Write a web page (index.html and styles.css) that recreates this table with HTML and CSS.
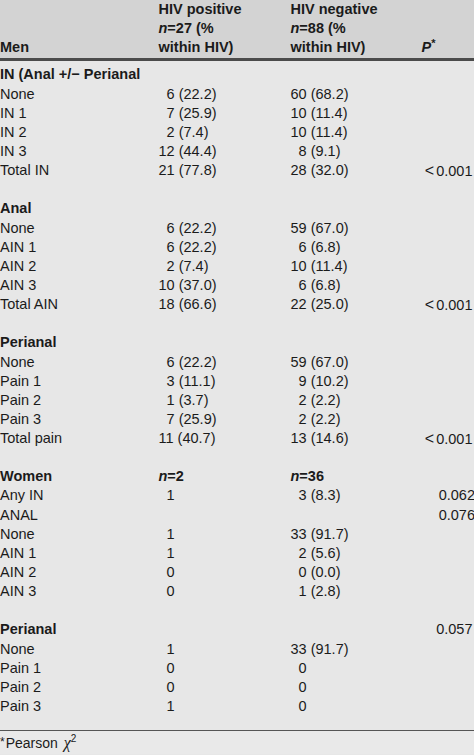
FILE: index.html
```html
<!DOCTYPE html>
<html>
<head>
<meta charset="utf-8">
<link rel="stylesheet" href="styles.css">
</head>
<body>
<div class="tbl">
  <div class="head">
    <div class="c1 b">Men</div>
    <div class="c2 b">HIV positive<br><i>n</i>=27 (%<br>within HIV)</div>
    <div class="c3 b">HIV negative<br><i>n</i>=88 (%<br>within HIV)</div>
    <div class="c4 b pstar"><i>P</i><sup>*</sup></div>
  </div>
  <div class="body">
    <div class="row"><div class="c1 b">IN (Anal +/− Perianal</div><div></div><div></div><div></div></div>
    <div class="row"><div class="c1">None</div><div class="c2">&#8199;6 (22.2)</div><div class="c3">60 (68.2)</div><div class="c4"></div></div>
    <div class="row"><div class="c1">IN 1</div><div class="c2">&#8199;7 (25.9)</div><div class="c3">10 (11.4)</div><div class="c4"></div></div>
    <div class="row"><div class="c1">IN 2</div><div class="c2">&#8199;2 (7.4)</div><div class="c3">10 (11.4)</div><div class="c4"></div></div>
    <div class="row"><div class="c1">IN 3</div><div class="c2">12 (44.4)</div><div class="c3">&#8199;8 (9.1)</div><div class="c4"></div></div>
    <div class="row"><div class="c1">Total IN</div><div class="c2">21 (77.8)</div><div class="c3">28 (32.0)</div><div class="c4"><span class="lt">&lt;</span>0.001</div></div>
    <div class="row blank"></div>
    <div class="row"><div class="c1 b">Anal</div><div></div><div></div><div></div></div>
    <div class="row"><div class="c1">None</div><div class="c2">&#8199;6 (22.2)</div><div class="c3">59 (67.0)</div><div class="c4"></div></div>
    <div class="row"><div class="c1">AIN 1</div><div class="c2">&#8199;6 (22.2)</div><div class="c3">&#8199;6 (6.8)</div><div class="c4"></div></div>
    <div class="row"><div class="c1">AIN 2</div><div class="c2">&#8199;2 (7.4)</div><div class="c3">10 (11.4)</div><div class="c4"></div></div>
    <div class="row"><div class="c1">AIN 3</div><div class="c2">10 (37.0)</div><div class="c3">&#8199;6 (6.8)</div><div class="c4"></div></div>
    <div class="row"><div class="c1">Total AIN</div><div class="c2">18 (66.6)</div><div class="c3">22 (25.0)</div><div class="c4"><span class="lt">&lt;</span>0.001</div></div>
    <div class="row blank"></div>
    <div class="row"><div class="c1 b">Perianal</div><div></div><div></div><div></div></div>
    <div class="row"><div class="c1">None</div><div class="c2">&#8199;6 (22.2)</div><div class="c3">59 (67.0)</div><div class="c4"></div></div>
    <div class="row"><div class="c1">Pain 1</div><div class="c2">&#8199;3 (11.1)</div><div class="c3">&#8199;9 (10.2)</div><div class="c4"></div></div>
    <div class="row"><div class="c1">Pain 2</div><div class="c2">&#8199;1 (3.7)</div><div class="c3">&#8199;2 (2.2)</div><div class="c4"></div></div>
    <div class="row"><div class="c1">Pain 3</div><div class="c2">&#8199;7 (25.9)</div><div class="c3">&#8199;2 (2.2)</div><div class="c4"></div></div>
    <div class="row"><div class="c1">Total pain</div><div class="c2">11 (40.7)</div><div class="c3">13 (14.6)</div><div class="c4"><span class="lt">&lt;</span>0.001</div></div>
    <div class="row blank"></div>
    <div class="row"><div class="c1 b">Women</div><div class="c2 b"><i>n</i>=2</div><div class="c3 b"><i>n</i>=36</div><div class="c4"></div></div>
    <div class="row"><div class="c1">Any IN</div><div class="c2">&#8199;1</div><div class="c3">&#8199;3 (8.3)</div><div class="c4 cut">0.062</div></div>
    <div class="row"><div class="c1">ANAL</div><div class="c2"></div><div class="c3"></div><div class="c4 cut">0.076</div></div>
    <div class="row"><div class="c1">None</div><div class="c2">&#8199;1</div><div class="c3">33 (91.7)</div><div class="c4"></div></div>
    <div class="row"><div class="c1">AIN 1</div><div class="c2">&#8199;1</div><div class="c3">&#8199;2 (5.6)</div><div class="c4"></div></div>
    <div class="row"><div class="c1">AIN 2</div><div class="c2">&#8199;0</div><div class="c3">&#8199;0 (0.0)</div><div class="c4"></div></div>
    <div class="row"><div class="c1">AIN 3</div><div class="c2">&#8199;0</div><div class="c3">&#8199;1 (2.8)</div><div class="c4"></div></div>
    <div class="row blank"></div>
    <div class="row"><div class="c1 b">Perianal</div><div></div><div></div><div class="c4">0.057</div></div>
    <div class="row"><div class="c1">None</div><div class="c2">&#8199;1</div><div class="c3">33 (91.7)</div><div class="c4"></div></div>
    <div class="row"><div class="c1">Pain 1</div><div class="c2">&#8199;0</div><div class="c3">&#8199;0</div><div class="c4"></div></div>
    <div class="row"><div class="c1">Pain 2</div><div class="c2">&#8199;0</div><div class="c3">&#8199;0</div><div class="c4"></div></div>
    <div class="row"><div class="c1">Pain 3</div><div class="c2">&#8199;1</div><div class="c3">&#8199;0</div><div class="c4"></div></div>
  </div>
  <div class="foot"><sup class="fa">*</sup>Pearson <i class="chi">χ</i><sup class="sq">2</sup></div>
</div>
</body>
</html>
```

FILE: styles.css
```css
html, body {
  margin: 0;
  padding: 0;
  background: #e7e7e7;
  overflow: hidden;
}
body {
  width: 474px;
  height: 755px;
  font-family: "Liberation Sans", Arial, Helvetica, sans-serif;
  font-size: 14.5px;
  color: #1b1b1b;
}
.tbl {
  width: 474px;
}
.head, .row {
  display: grid;
  grid-template-columns: 158.5px 132px 1fr 90px;
}
.head {
  height: 58px;
  background: #d3d3d3;
  border-bottom: 3px solid #4b4b4b;
  align-items: end;
  line-height: 19.2px;
  overflow: hidden;
}
.head > div {
  padding-bottom: 7px;
}
.b { font-weight: bold; }
.head .pstar {
  text-align: left;
  padding-left: 37.5px;
  padding-right: 0;
}
.pstar sup {
  font-size: 11px;
  line-height: 0;
  vertical-align: 5px;
  font-style: normal;
}
.body {
  padding: 4.4px 0 13.5px;
}
.row {
  height: 19.15px;
  line-height: 19.15px;
  white-space: nowrap;
}
.c1 {
  padding-left: 0;
}
.c4 {
  text-align: right;
  padding-right: 1.5px;
}
.lt {
  font-size: 16px;
  margin-right: 2px;
}
.c4.cut {
  padding-right: 0;
  margin-right: -1px;
}
.foot {
  border-top: 1.5px solid #555;
  background: #e9e9e9;
  height: 23px;
  line-height: 24px;
  font-size: 14px;
}
.fa {
  font-size: 12px;
  line-height: 0;
  vertical-align: 2px;
  margin-right: 1px;
}
.chi {
  font-family: "Liberation Serif", "Times New Roman", serif;
  font-size: 16px;
  margin-left: 2px;
}
.sq {
  font-size: 10px;
  line-height: 0;
  vertical-align: 6px;
}
```
